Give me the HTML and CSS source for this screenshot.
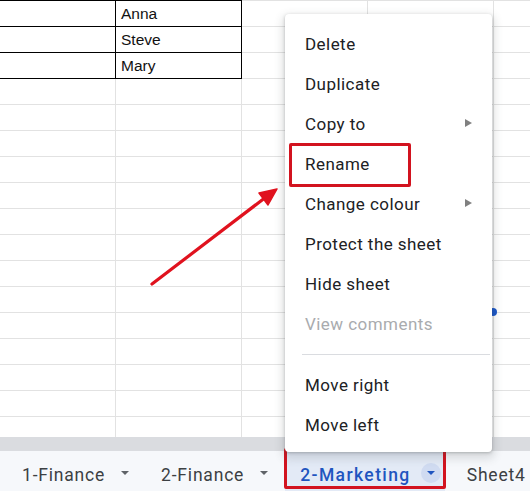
FILE: index.html
```html
<!DOCTYPE html>
<html>
<head>
<meta charset="utf-8">
<link rel="stylesheet" href="styles.css">
</head>
<body>
<div class="page">
  <div class="sheet">
    <div class="grid">
      <div class="c bk"></div><div class="c bk">Anna</div><div class="c"></div><div class="c"></div><div class="c"></div>
      <div class="c bk"></div><div class="c bk">Steve</div><div class="c"></div><div class="c"></div><div class="c"></div>
      <div class="c bk"></div><div class="c bk">Mary</div><div class="c"></div><div class="c"></div><div class="c"></div>
      <div class="c"></div><div class="c"></div><div class="c"></div><div class="c"></div><div class="c"></div>
      <div class="c"></div><div class="c"></div><div class="c"></div><div class="c"></div><div class="c"></div>
      <div class="c"></div><div class="c"></div><div class="c"></div><div class="c"></div><div class="c"></div>
      <div class="c"></div><div class="c"></div><div class="c"></div><div class="c"></div><div class="c"></div>
      <div class="c"></div><div class="c"></div><div class="c"></div><div class="c"></div><div class="c"></div>
      <div class="c"></div><div class="c"></div><div class="c"></div><div class="c"></div><div class="c"></div>
      <div class="c"></div><div class="c"></div><div class="c"></div><div class="c"></div><div class="c"></div>
      <div class="c"></div><div class="c"></div><div class="c"></div><div class="c"></div><div class="c"></div>
      <div class="c"></div><div class="c"></div><div class="c"></div><div class="c"></div><div class="c"></div>
      <div class="c"></div><div class="c"></div><div class="c"></div><div class="c"></div><div class="c"></div>
      <div class="c"></div><div class="c"></div><div class="c"></div><div class="c"></div><div class="c"></div>
      <div class="c"></div><div class="c"></div><div class="c"></div><div class="c"></div><div class="c"></div>
      <div class="c"></div><div class="c"></div><div class="c"></div><div class="c"></div><div class="c"></div>
      <div class="c"></div><div class="c"></div><div class="c"></div><div class="c"></div><div class="c"></div>
    </div>
  </div>
  <div class="scrollbar"></div>
  <div class="tabs">
    <div class="tab"><span class="tab-name">1-Finance</span><span class="caret"></span></div>
    <div class="tab"><span class="tab-name">2-Finance</span><span class="caret"></span></div>
    <div class="tab active"><span class="tab-name">2-Marketing</span><span class="caret"></span><span class="hl hl-tab"></span></div>
    <div class="tab"><span class="tab-name">Sheet4</span></div>
  </div>

  <div class="dot"></div>

  <div class="menu">
    <div class="item">Delete</div>
    <div class="item">Duplicate</div>
    <div class="item">Copy to<span class="sub"></span></div>
    <div class="item">Rename</div>
    <div class="item">Change colour<span class="sub"></span></div>
    <div class="item">Protect the sheet</div>
    <div class="item">Hide sheet</div>
    <div class="item disabled">View comments</div>
    <div class="sep"></div>
    <div class="item">Move right</div>
    <div class="item">Move left</div>
    <div class="hl hl-rename"></div>
  </div>

  <svg class="arrow" width="530" height="491" viewBox="0 0 530 491">
    <line x1="152" y1="284" x2="266" y2="197" stroke="#e0121e" stroke-width="3.2" stroke-linecap="round"/>
    <polygon points="277,189 259,193 268,205" fill="#e0121e" stroke="#e0121e" stroke-width="1.5" stroke-linejoin="round"/>
  </svg>
</div>
</body>
</html>
```

FILE: styles.css
```css
html, body {
  margin: 0;
  padding: 0;
  background: #fff;
}
.page {
  position: relative;
  width: 530px;
  height: 491px;
  overflow: hidden;
  font-family: Roboto, "Liberation Sans", sans-serif;
}
.sheet {
  height: 437px;
  overflow: hidden;
}
.grid {
  display: grid;
  grid-template-columns: repeat(5, 126px);
  grid-auto-rows: 26px;
  margin-left: -10px;
  border-top: 1px solid #e2e2e2;
}
.c {
  box-sizing: border-box;
  border-right: 1px solid #e2e2e2;
  border-bottom: 1px solid #e2e2e2;
  font-family: "Liberation Sans", Arial, sans-serif;
  font-size: 15.5px;
  color: #111;
  padding-left: 5px;
  line-height: 26px;
}
.c.bk {
  border-right-color: #000;
  border-bottom-color: #000;
}
.grid > .c.bk:nth-child(1),
.grid > .c.bk:nth-child(2) {
  box-shadow: 0 -1px 0 #000;
}
.scrollbar {
  height: 14px;
  background: #dadce0;
}
.tabs {
  height: 40px;
  background: #f6f8fb;
  display: flex;
  align-items: stretch;
  padding-left: 7px;
  gap: 7px;
}
.tab {
  position: relative;
  flex-shrink: 0;
  white-space: nowrap;
  display: flex;
  align-items: center;
  padding: 3px 4px 0 15px;
  gap: 10px;
  color: #3c4043;
  font-size: 17.5px;
  letter-spacing: 0.8px;
}
.tab-name {
  padding-top: 4px;
}
.tab.active {
  background: #e3eaf6;
  color: #1f55bf;
  font-weight: 500;
  letter-spacing: 1.4px;
}
.caret {
  flex-shrink: 0;
  width: 20px;
  height: 20px;
  border-radius: 50%;
  position: relative;
}
.caret::after {
  content: "";
  position: absolute;
  left: 6px;
  top: 8px;
  border-left: 4px solid transparent;
  border-right: 4px solid transparent;
  border-top: 4px solid #5f6368;
}
.tab.active .caret {
  background: #d0dbf1;
}
.tab.active .caret::after {
  border-top-color: #1f55bf;
}
.dot {
  position: absolute;
  left: 489px;
  top: 308px;
  width: 8px;
  height: 8px;
  border-radius: 50%;
  background: #1a56c8;
}
.menu {
  position: absolute;
  left: 285px;
  top: 14px;
  width: 207px;
  box-sizing: border-box;
  background: #fff;
  padding: 10px 0 7px;
  box-shadow: 0 1px 3px rgba(60,64,67,0.3), 0 4px 8px 3px rgba(60,64,67,0.15);
  border-radius: 4px;
}
.item {
  position: relative;
  height: 40px;
  line-height: 40px;
  padding-left: 20px;
  font-size: 17px;
  letter-spacing: 0.45px;
  color: #202124;
  white-space: nowrap;
}
.item.disabled {
  color: #a9abae;
}
.sub {
  position: absolute;
  left: 180px;
  top: 15px;
  border-top: 4.5px solid transparent;
  border-bottom: 4.5px solid transparent;
  border-left: 7px solid #808080;
}
.sep {
  height: 1px;
  background: #dadce0;
  margin: 10px 2px 10px 17px;
}
.hl {
  position: absolute;
  border: 3px solid #d2131f;
  border-radius: 2px;
  box-sizing: border-box;
}
.hl-rename {
  left: 4px;
  top: 129px;
  width: 122px;
  height: 44px;
}
.hl-tab {
  left: -1px;
  top: -3px;
  right: -1px;
  height: 41px;
}
.arrow {
  position: absolute;
  left: 0;
  top: 0;
  pointer-events: none;
}
```
